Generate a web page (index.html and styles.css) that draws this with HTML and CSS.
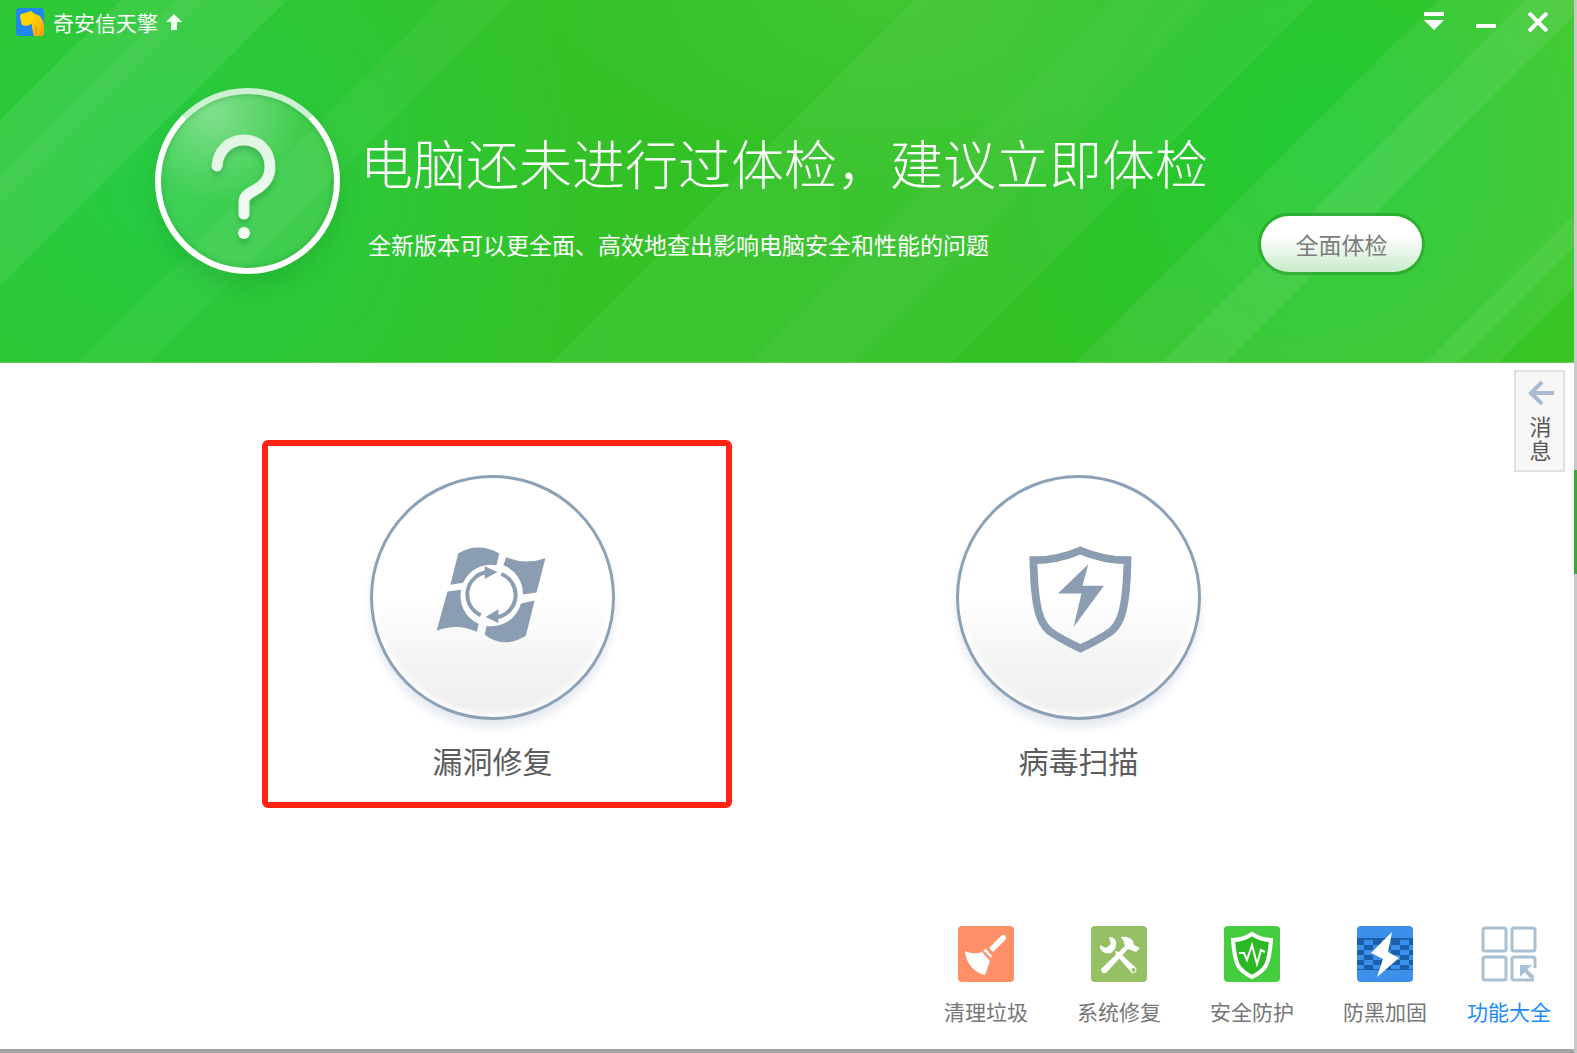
FILE: index.html
```
<!DOCTYPE html>
<html lang="zh-CN">
<head>
    <meta charset="UTF-8">
    <meta name="viewport" content="width=device-width, initial-scale=1.0">
    <title>奇安信天擎</title>
    <link rel="stylesheet" href="styles.css">
</head>
<body>
    <div class="window">
        <header class="hero">
            <svg class="hero-stripes" viewBox="0 0 1574 363" preserveAspectRatio="none" aria-hidden="true">
                <g fill="#fff">
                    <path fill-opacity=".08" d="M121 0H287L-76 363H-242z"/>
                    <path fill-opacity=".04" d="M177 0H205L-158 363H-186z"/>
                    <path fill-opacity=".04" d="M443 0H513L150 363H80z"/>
                    <path fill-opacity=".05" d="M915 0H1315L952 363H552z"/>
                    <path fill-opacity=".03" d="M1115 0H1212L849 363H752z"/>
                    <path fill-opacity=".07" d="M1439 0H1862L1499 363H1076z"/>
                    <path fill-opacity=".07" d="M1525 0H1589L1226 363H1162z"/>
                    <path fill-opacity=".06" d="M1789 0H1821L1458 363H1426z"/>
                </g>
            </svg>
            <div class="titlebar">
                <svg class="logo" viewBox="0 0 28 28" aria-hidden="true">
                    <defs>
                        <linearGradient id="hand" x1="0" y1="0" x2="1" y2="1">
                            <stop offset=".4" stop-color="#ffd400"/>
                            <stop offset="1" stop-color="#f59a12"/>
                        </linearGradient>
                    </defs>
                    <rect width="28" height="28" rx="4" fill="#1f87ee"/>
                    <path fill="url(#hand)" d="M4 8l1-2 4-1 6-2 4 3 5 2 3 5 1 5v8l-2 2h-8l-1-4-1-5v-3l-6 2-4-1-1-3z"/>
                    <path fill="none" stroke="#d98a10" d="M20 18v7"/>
                </svg>
                <span class="app-name">奇安信天擎</span>
                <svg class="up-arrow" viewBox="0 0 16 16" aria-hidden="true"><path fill="#f0fcf0" d="M8 0l8 8h-5v8H5V8H0z"/></svg>
                <div class="window-controls">
                    <button class="control" aria-label="菜单"><svg viewBox="0 0 20 20"><path fill="#fff" d="M0 0h20v4H0zM0 8h20l-10 10z"/></svg></button>
                    <button class="control" aria-label="最小化"><svg viewBox="0 0 20 20"><path fill="#fff" d="M0 12h20v4H0z"/></svg></button>
                    <button class="control" aria-label="关闭"><svg viewBox="0 0 20 20"><path stroke="#fff" stroke-width="4" d="M1 1l18 18M19 1L1 19"/></svg></button>
                </div>
            </div>
            <div class="status">
                <div class="status-icon">
                    <svg viewBox="0 0 66 108" aria-hidden="true">
                        <defs>
                            <linearGradient id="mark" x1="0" y1="0" x2="0" y2="108" gradientUnits="userSpaceOnUse">
                                <stop offset="0" stop-color="#dcf5e0"/>
                                <stop offset="1" stop-color="#fafefa"/>
                            </linearGradient>
                        </defs>
                        <path fill="none" stroke="url(#mark)" stroke-width="11" stroke-linecap="round" d="M6 33C7 18 18 7 33 7C48 7 59 18 59 34C59 47 51 53 44 57C36 61 33 64 33 69V81"/>
                        <circle cx="33" cy="100" r="6" fill="#f4fdf4"/>
                    </svg>
                </div>
                <div class="status-text">
                    <h1>电脑还未进行过体检，建议立即体检</h1>
                    <div class="status-row">
                        <p>全新版本可以更全面、高效地查出影响电脑安全和性能的问题</p>
                        <button class="check-button">全面体检</button>
                    </div>
                </div>
            </div>
        </header>

        <main class="content">
            <button class="message-tab">
                <svg viewBox="0 0 26 24" aria-hidden="true"><path fill="none" stroke="#a9bbcf" stroke-width="4" d="M26 12H3M14 1L3 12l11 11"/></svg>
                <span>消息</span>
            </button>
            <div class="features">
                <button class="feature selected">
                    <span class="feature-circle">
                        <svg viewBox="0 0 244 244" aria-hidden="true">
                            <g transform="translate(-1 1)">
                                <g fill="#8a9db2">
                                    <path d="M88 76q20-12 42 0l-3 12a31 31 0 0 0-34 18l-13 2z"/>
                                    <path d="M137 80q20 8 40 1l-9 35-14 2a31 31 0 0 0-20-30z"/>
                                    <path d="M77 115l14-2a31 31 0 0 0 18 35l-2 8q-20-9-41-1z"/>
                                    <path d="M152 127l14-3-9 36q-22 14-42-1l2-9a31 31 0 0 0 35-23z"/>
                                    <path d="M115 89l13 6-13 7zM129 133v14l-13-6z"/>
                                </g>
                                <path fill="none" stroke="#8a9db2" stroke-width="4" d="M119 95a23 23 0 0 0-8 44M132 97a23 23 0 0 1-4 44"/>
                            </g>
                        </svg>
                    </span>
                    <span class="feature-label">漏洞修复</span>
                </button>
                <button class="feature">
                    <span class="feature-circle">
                        <svg viewBox="0 0 244 244" aria-hidden="true">
                            <path fill="none" stroke="#8a9db2" stroke-width="8" d="M124 74q-23 10-48 10c1 53 8 64 15 71 8 7 21 13 33 19 12-6 25-12 33-19 7-7 14-18 15-71q-25 0-48-10z"/>
                            <path fill="#8a9db2" d="M132 88l-31 30h24l-8 34 31-42h-22z"/>
                        </svg>
                    </span>
                    <span class="feature-label">病毒扫描</span>
                </button>
            </div>
            <nav class="tools">
                <a class="tool" href="#">
                    <svg viewBox="0 0 56 56" aria-hidden="true">
                        <rect width="56" height="56" rx="4" fill="#ff8f66"/>
                        <path fill="#fff" d="M44 9q4-1 4 4L35 26l-4-4zM28 23l6 7-1 2-8-8zM24 26l8 9-5 14C17 47 8 38 7 25q9 4 17 1z"/>
                    </svg>
                    <span>清理垃圾</span>
                </a>
                <a class="tool" href="#">
                    <svg viewBox="0 0 56 56" aria-hidden="true">
                        <rect width="56" height="56" rx="4" fill="#95c064"/>
                        <path fill="#fff" d="M10 43L34 20q-1-5-4-9q8-1 12 4l1 4 6 3-4 4-5-2-3-1L15 47q-5 1-5-4z"/>
                        <path fill="#fff" d="M18 11q8 0 7 8l-1 4-4 4q-8 2-11-5v-3l6 3 5-4z"/>
                        <path fill="#fff" fill-rule="evenodd" d="M24 25l4 1 17 16q2 5-4 5L25 29zM42 42a2 2 0 1 0 1 0z"/>
                    </svg>
                    <span>系统修复</span>
                </a>
                <a class="tool" href="#">
                    <svg viewBox="0 0 56 56" aria-hidden="true">
                        <rect width="56" height="56" rx="4" fill="#45cd3f"/>
                        <path fill="#2cb824" stroke="#fff" stroke-width="4" d="M28 8q-9 6-19 6c2 25 5 30 19 37 14-7 17-12 19-37q-10 0-19-6z"/>
                        <path fill="none" stroke="#fff" stroke-width="2" d="M15 27h5l3 7 5-15 5 19 4-14 4 2"/>
                    </svg>
                    <span>安全防护</span>
                </a>
                <a class="tool" href="#">
                    <svg viewBox="0 0 56 56" aria-hidden="true">
                        <defs>
                            <pattern id="checks" width="18" height="10" patternUnits="userSpaceOnUse" patternTransform="translate(-2 14)">
                                <path fill="#1a5fab" d="M0 0h9v5H0zM9 5h9v5H9z"/>
                            </pattern>
                        </defs>
                        <rect width="56" height="56" rx="4" fill="#3d90ea"/>
                        <path fill="url(#checks)" d="M0 13h56v31H0z"/>
                        <path fill="#1a5fab" d="M0 12h56v2H0zM0 43h56v1H0z"/>
                        <path fill="#fff" d="M35 6L14 27l12 6-6 18 22-19-11-6z"/>
                    </svg>
                    <span>防黑加固</span>
                </a>
                <a class="tool all" href="#">
                    <svg viewBox="0 0 56 56" aria-hidden="true">
                        <g fill="none" stroke="#a8c1d5" stroke-width="3">
                            <rect x="2" y="2" width="23" height="23" rx="2"/>
                            <rect x="31" y="2" width="23" height="23" rx="2"/>
                            <rect x="2" y="31" width="23" height="23" rx="2"/>
                            <path d="M54 42V33q0-2-2-2H33q-2 0-2 2v19q0 2 2 2h20"/>
                            <path stroke-width="4" d="M43 43l9 9"/>
                        </g>
                        <path fill="#a8c1d5" d="M39 39h12L39 51z"/>
                    </svg>
                    <span>功能大全</span>
                </a>
            </nav>
        </main>
    </div>
</body>
</html>
```

FILE: styles.css
```
* {
    box-sizing: border-box;
}

/* the desktop shows as a thin edge right of and below the window */
body {
    margin: 0;
    min-height: 100vh;
    display: flex;
    padding: 0 3px 4px 0;
    background:
        linear-gradient(#36a936, #36a936) right 470px / 3px 104px no-repeat,
        linear-gradient(#c9c9c9, #c9c9c9) right top / 3px 100% no-repeat,
        #a5a5a5;
    font-family: "Noto Sans CJK SC", sans-serif;
}

button {
    border: none;
    padding: 0;
    background: none;
    font-family: inherit;
    cursor: pointer;
}

svg {
    display: block;
}

.window {
    flex: 1;
    display: flex;
    flex-direction: column;
    background: white;
}

/* green status area */
.hero {
    position: relative;
    height: 363px;
    color: white;
    border-bottom: 1px solid #62d552;
    background:
        radial-gradient(ellipse 420px 400px at 160px 190px, #26cb43 0%, rgba(38, 203, 67, 0) 100%),
        radial-gradient(ellipse 340px 340px at 1330px 150px, #22cb36 0%, rgba(34, 203, 54, 0) 100%),
        radial-gradient(ellipse 330px 180px at 880px 0, #40c632 0%, rgba(64, 198, 50, 0) 100%),
        linear-gradient(90deg, #34c62c, #33c126 40%, #2fc124 70%, #3cc522);
}

.hero-stripes {
    position: absolute;
    top: 0;
    left: 0;
    width: 100%;
    height: 100%;
}

.titlebar {
    position: relative;
    display: flex;
    align-items: center;
    height: 44px;
    padding: 0 26px 0 16px;
}

.logo {
    width: 28px;
    height: 28px;
}

.app-name {
    margin: 0 8px 0 9px;
    font-size: 21px;
    line-height: 24px;
}

.up-arrow {
    width: 16px;
    height: 16px;
}

.window-controls {
    display: flex;
    gap: 32px;
    margin-left: auto;
}

.control svg {
    width: 20px;
    height: 20px;
}

.status {
    position: relative;
    display: flex;
    gap: 20px;
    padding: 44px 152px 0 155px;
}

.status-icon {
    flex: none;
    display: flex;
    justify-content: center;
    width: 185px;
    height: 186px;
    padding: 39px 7px 0 0;
    border: 6px solid white;
    border-top-color: #cdf0d3;
    border-radius: 50%;
    background:
        radial-gradient(circle at 30% 10%, rgba(255, 255, 255, 0.35), rgba(255, 255, 255, 0) 45%),
        rgba(255, 255, 255, 0.1);
    box-shadow: 0 14px 20px rgba(20, 120, 30, 0.2), inset 0 0 6px rgba(20, 130, 40, 0.4);
}

.status-icon svg {
    width: 66px;
    height: 108px;
    filter: drop-shadow(0 5px 3px rgba(20, 130, 40, 0.35));
}

.status-text {
    flex: 1;
    padding-top: 42px;
}

.status-text h1 {
    margin: 0;
    font-size: 53px;
    font-weight: 300;
    line-height: 64px;
    white-space: nowrap;
}

.status-row {
    display: flex;
    align-items: center;
    justify-content: space-between;
    margin-top: 22px;
    padding-left: 8px;
}

.status-row p {
    margin: 0;
    font-size: 23px;
    line-height: 32px;
    white-space: nowrap;
}

.check-button {
    width: 161px;
    height: 56px;
    border-radius: 28px;
    background: linear-gradient(#ffffff 35%, #c9ebcb);
    box-shadow: 0 0 0 3px rgba(30, 130, 30, 0.4);
    color: #7d7d7d;
    font-size: 23px;
}

/* main area */
.content {
    position: relative;
    flex: 1;
    display: flex;
    flex-direction: column;
    justify-content: space-between;
    padding: 77px 23px 22px 262px;
}

.message-tab {
    position: absolute;
    top: 7px;
    right: 9px;
    display: flex;
    flex-direction: column;
    align-items: center;
    gap: 8px;
    width: 51px;
    height: 102px;
    padding: 9px 0 0 2px;
    border: 2px solid #e1e1e1;
    background: #f7f7f7;
    color: #555;
    font-size: 22px;
    line-height: 24px;
}

.message-tab svg {
    width: 26px;
    height: 24px;
}

.message-tab span {
    width: 22px;
}

.features {
    display: flex;
    gap: 116px;
}

.feature {
    display: flex;
    flex-direction: column;
    align-items: center;
    gap: 20px;
    width: 470px;
    height: 368px;
    padding-top: 29px;
    border: 6px solid transparent;
    border-radius: 6px;
}

.feature.selected {
    border-color: #ff2314;
}

.feature-circle {
    width: 245px;
    height: 245px;
    margin-right: 9px;
    border: 3px solid #8ca0b6;
    border-radius: 50%;
    background: linear-gradient(#fff 50%, #f3f5f3 75%, #efefef 95%);
    box-shadow: 0 8px 8px #e6eaf1, inset 0 0 6px 3px #fff;
}

.feature-label {
    margin-right: 9px;
    color: #5c5c5c;
    font-size: 30px;
    line-height: 40px;
}

.tools {
    display: flex;
    justify-content: flex-end;
    gap: 49px;
}

.tool {
    display: flex;
    flex-direction: column;
    align-items: center;
    gap: 13px;
    color: #777;
    font-size: 21px;
    line-height: 32px;
    text-decoration: none;
}

.tool svg {
    width: 56px;
    height: 56px;
}

.tool.all {
    margin-left: -9px;
    color: #1b8cff;
}
```
